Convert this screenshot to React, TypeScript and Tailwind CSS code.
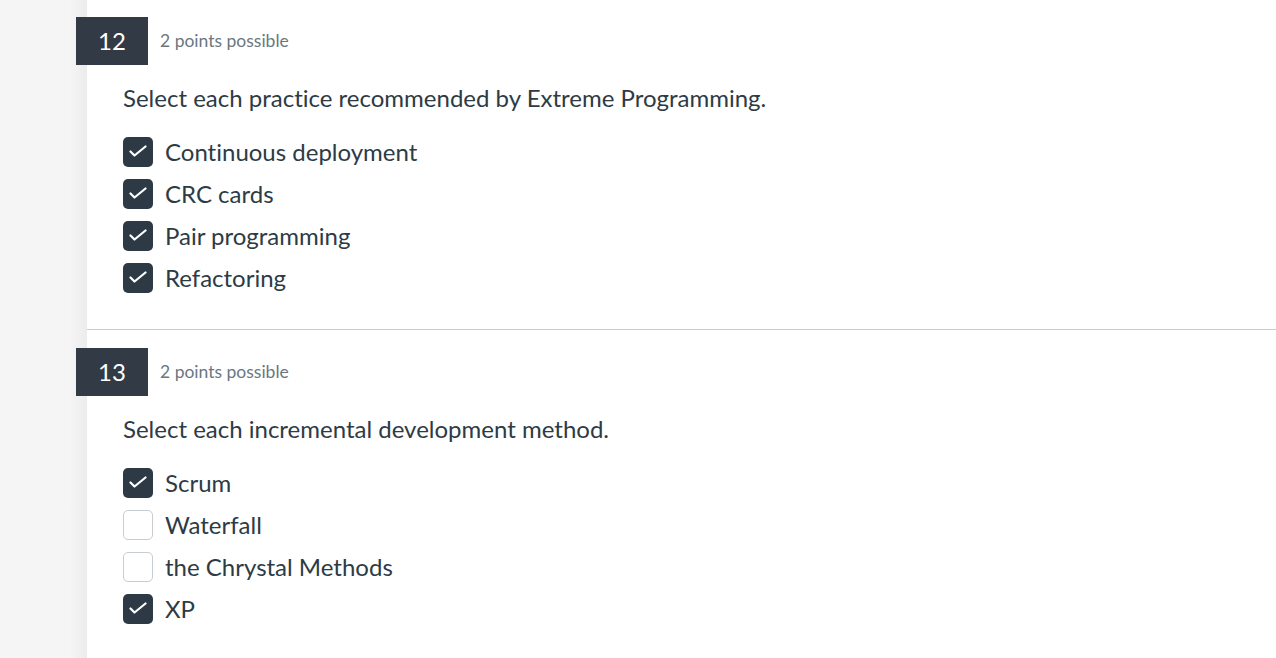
import React from 'react';

type Question = {
    num: number;
    points: string;
    text: string;
    options: { label: string; checked: boolean }[];
};

const QUESTIONS: Question[] = [
    {
        num: 12,
        points: '2 points possible',
        text: 'Select each practice recommended by Extreme Programming.',
        options: [
            { label: 'Continuous deployment', checked: true },
            { label: 'CRC cards', checked: true },
            { label: 'Pair programming', checked: true },
            { label: 'Refactoring', checked: true },
        ],
    },
    {
        num: 13,
        points: '2 points possible',
        text: 'Select each incremental development method.',
        options: [
            { label: 'Scrum', checked: true },
            { label: 'Waterfall', checked: false },
            { label: 'the Chrystal Methods', checked: false },
            { label: 'XP', checked: true },
        ],
    },
];

function Checkbox({ checked }: { checked: boolean }) {
    if (!checked) {
        return <div className="w-[30px] h-[30px] rounded-[5px] border border-[#c7cdd1] bg-white shrink-0" />;
    }
    return (
        <div className="w-[30px] h-[30px] rounded-[5px] bg-[#2d3a45] flex items-center justify-center shrink-0">
            <svg width="18" height="18" viewBox="0 0 18 18" fill="none">
                <path d="M1.5 8.5 L5.5 12.5 L16.5 3.5" stroke="white" strokeWidth="2.2" strokeLinecap="round" strokeLinejoin="round" />
            </svg>
        </div>
    );
}

function QuestionBlock({ q, last }: { q: Question; last: boolean }) {
    return (
        <div className={`${q.num === 12 ? 'pt-[17px]' : 'pt-[18px]'} ${last ? '' : 'pb-[30px] border-b border-[#c7cdd1]'}`}>
            <div className="flex items-center">
                <div className="-ml-[11px] w-[72px] h-[48px] bg-[#313a45] text-white text-[24px] flex items-center justify-center">
                    {q.num}
                </div>
                <span className="ml-3 text-[17.5px] text-[#6b7780]">{q.points}</span>
            </div>
            <div className="pl-[36px]">
                <p className="mt-[18px] mb-[18px] text-[24px] leading-[30px] text-[#2d3b45]">{q.text}</p>
                <div className="flex flex-col">
                    {q.options.map((opt) => (
                        <label key={opt.label} className="h-[42px] flex items-center gap-3">
                            <Checkbox checked={opt.checked} />
                            <span className="text-[24px] text-[#2d3b45]">{opt.label}</span>
                        </label>
                    ))}
                </div>
            </div>
        </div>
    );
}

export default function App() {
    return (
        <div className="flex min-h-[658px] font-['Lato','Liberation_Sans',sans-serif] [font-variant-ligatures:none]">
            <div className="w-[87px] shrink-0 bg-gradient-to-r from-[#f5f5f5] from-80% to-[#ececec]" />
            <div className="flex-1 bg-white">
                {QUESTIONS.map((q, i) => (
                    <QuestionBlock key={q.num} q={q} last={i === QUESTIONS.length - 1} />
                ))}
            </div>
        </div>
    );
}
